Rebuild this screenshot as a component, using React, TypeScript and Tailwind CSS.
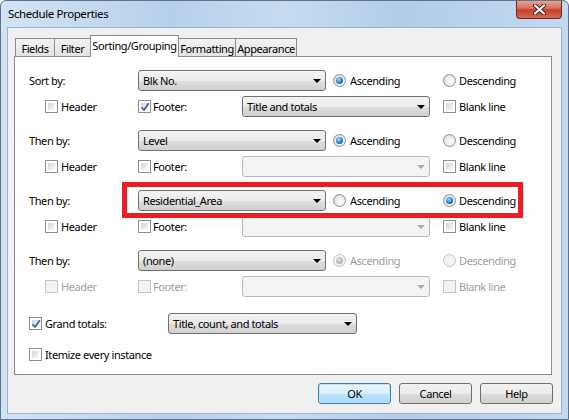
import React from "react";

const FONT = "font-['Noto_Sans',sans-serif] text-[11px] leading-none tracking-[-0.4px]";

function CheckBox({ checked = false, disabled = false }: { checked?: boolean; disabled?: boolean }) {
  return (
    <div
      className={`relative h-[13px] w-[13px] shrink-0 border p-[2px] ${
        disabled ? "border-[#c6c6c6] bg-[#f4f4f4]" : "border-[#8e8f8f] bg-white"
      }`}
    >
      <div
        className={`h-full w-full ${
          disabled
            ? "bg-[#f2f2f2]"
            : "bg-[linear-gradient(135deg,#cfd3d8,#eef0f2_70%,#f8f8f8)]"
        }`}
      />
      {checked && (
        <svg className="absolute left-[1px] top-[1px]" width="10" height="10" viewBox="0 0 10 10">
          <path d="M1.5 5.2 L4 8 L8.8 1.2" fill="none" stroke="#3b5aa0" strokeWidth="1.7" />
        </svg>
      )}
    </div>
  );
}

function Radio({ checked = false, disabled = false }: { checked?: boolean; disabled?: boolean }) {
  return (
    <div
      className={`flex h-[13px] w-[13px] shrink-0 items-center justify-center rounded-full border ${
        disabled
          ? "border-[#c4c4c4] bg-[#f2f2f2]"
          : "border-[#8e8f8f] bg-[radial-gradient(circle_at_60%_60%,#ffffff,#d6d6d6)]"
      }`}
    >
      {checked && (
        <div
          className={`h-[7px] w-[7px] rounded-full ${
            disabled
              ? "bg-[radial-gradient(circle_at_40%_35%,#e0e0e0,#9a9a9a)]"
              : "bg-[radial-gradient(circle_at_40%_35%,#9ddcff,#1c78c4_60%,#0c3f78)]"
          }`}
        />
      )}
    </div>
  );
}

function Combo({ value = "", width, disabled = false }: { value?: string; width: string; disabled?: boolean }) {
  return (
    <div
      className={`flex h-[21px] shrink-0 items-center justify-between rounded-[3px] border pl-[4px] pr-[4px] ${width} ${
        disabled
          ? "border-[#b5b8bc] bg-[#f4f4f4]"
          : "border-[#707070] bg-[linear-gradient(180deg,#f3f3f3_0%,#ebebeb_50%,#dedede_51%,#d0d0d0_100%)]"
      }`}
    >
      <span className="text-black">{value}</span>
      <svg width="8" height="4" viewBox="0 0 8 4">
        <path d="M0 0 H8 L4 4 Z" fill={disabled ? "#a9a9a9" : "#000"} />
      </svg>
    </div>
  );
}

function SortGroup({
  label,
  field,
  order,
  footer = false,
  footerValue = "",
  disabled = false,
  last = false,
}: {
  label: string;
  field: string;
  order: "asc" | "desc";
  footer?: boolean;
  footerValue?: string;
  disabled?: boolean;
  last?: boolean;
}) {
  const txt = disabled ? "text-[#a0a0a0]" : "text-black";
  return (
    <div className={`flex flex-col gap-[5px] ${last ? "" : "mb-[13px]"}`}>
      <div className="flex h-[21px] items-center">
        <span className="w-[109px] text-black">{label}</span>
        <Combo value={field} width="w-[188px]" />
        <div className="ml-[7px] flex w-[110px] items-center gap-[4px]">
          <Radio checked={order === "asc"} disabled={disabled} />
          <span className={txt}>Ascending</span>
        </div>
        <div className="flex items-center gap-[3px]">
          <Radio checked={order === "desc"} disabled={disabled} />
          <span className={txt}>Descending</span>
        </div>
      </div>
      <div className="flex h-[21px] items-center pl-[16px]">
        <div className="flex w-[93px] items-center gap-[3px]">
          <CheckBox disabled={disabled} />
          <span className={txt}>Header</span>
        </div>
        <div className="flex w-[104px] items-center gap-[2px]">
          <CheckBox checked={footer} disabled={disabled} />
          <span className={txt}>Footer:</span>
        </div>
        <Combo value={footerValue} width="w-[188px]" disabled={!footer} />
        <div className="ml-[13px] flex items-center gap-[3px]">
          <CheckBox disabled={disabled} />
          <span className={txt}>Blank line</span>
        </div>
      </div>
    </div>
  );
}

function Button({ label, primary = false }: { label: string; primary?: boolean }) {
  return (
    <div
      className={`flex h-[21px] w-[73px] items-center justify-center rounded-[3px] border text-black ${
        primary
          ? "border-[#3c7fb1] bg-[linear-gradient(180deg,#eaf6fd_0%,#d9f0fc_50%,#bee6fd_51%,#a7d9f5_100%)] shadow-[inset_0_0_0_1px_#bde3f7]"
          : "border-[#707070] bg-[linear-gradient(180deg,#f2f2f2_0%,#ebebeb_50%,#dddddd_51%,#cfcfcf_100%)]"
      }`}
    >
      {label}
    </div>
  );
}

export default function App() {
  const tabs = [
    { name: "Fields", w: "w-[40px]" },
    { name: "Filter", w: "w-[37px]" },
    { name: "Sorting/Grouping", w: "w-[89px]", active: true },
    { name: "Formatting", w: "w-[58px]" },
    { name: "Appearance", w: "w-[62px]" },
  ];

  return (
    <div
      className={`${FONT} flex h-[420px] w-[569px] flex-col overflow-hidden rounded-t-[6px] border border-[#5b7391] bg-[linear-gradient(90deg,#d3e3f4_0%,#b7d0ea_30%,#c6dbf0_50%,#b3cde9_70%,#c2d8ee_100%)]`}
    >
      {/* Title bar */}
      <div className="relative flex h-[26px] shrink-0 items-center pl-[7px]">
        <span className="text-[11.5px] text-black">Schedule Properties</span>
        <div className="absolute right-[6px] top-[-1px] flex h-[19px] w-[46px] items-center justify-center rounded-b-[4px] border border-t-0 border-[#6b2a20] bg-[linear-gradient(180deg,#e9a99b_0%,#d8705c_45%,#c4412a_55%,#d66a4f_100%)]">
          <svg width="13" height="11" viewBox="0 0 13 11">
            <path d="M2 1.5 L11 9.5 M11 1.5 L2 9.5" stroke="#4a1a12" strokeWidth="4" strokeLinecap="round" />
            <path d="M2 1.5 L11 9.5 M11 1.5 L2 9.5" stroke="#ffffff" strokeWidth="2.2" strokeLinecap="round" />
          </svg>
        </div>
      </div>

      {/* Client area */}
      <div className="mx-[6px] mb-[5px] flex flex-1 flex-col border border-[#9cb2ca] bg-[#f0f0f0]">
        {/* Tabs */}
        <div className="ml-[7px] mt-[7px] flex h-[21px] items-end">
          {tabs.map((t) =>
            t.active ? (
              <div
                key={t.name}
                className={`relative z-10 -mb-px -ml-px flex h-[22px] items-start justify-center border border-b-0 border-[#898c95] bg-white pt-[4px] ${t.w}`}
              >
                {t.name}
              </div>
            ) : (
              <div
                key={t.name}
                className={`flex h-[18px] items-center justify-center border border-b-0 border-[#898c95] bg-[linear-gradient(180deg,#f2f2f2,#e3e3e3)] -ml-px first:ml-0 pt-[2px] ${t.w}`}
              >
                {t.name}
              </div>
            )
          )}
        </div>

        {/* Tab panel */}
        <div className="relative ml-[6px] mr-[9px] flex h-[319px] flex-col border border-[#898c95] bg-white pl-[14px] pt-[13px]">
          <SortGroup label="Sort by:" field="Blk No." order="asc" footer footerValue="Title and totals" />
          <SortGroup label="Then by:" field="Level" order="asc" />
          <SortGroup label="Then by:" field="Residential_Area" order="desc" />
          <SortGroup label="Then by:" field="(none)" order="asc" disabled last />

          <div className="mt-[16px] flex h-[21px] items-center">
            <div className="flex w-[139px] items-center gap-[3px]">
              <CheckBox checked />
              <span>Grand totals:</span>
            </div>
            <Combo value="Title, count, and totals" width="w-[189px]" />
          </div>
          <div className="mt-[10px] flex h-[21px] items-center gap-[3px]">
            <CheckBox />
            <span>Itemize every instance</span>
          </div>

          {/* highlight */}
          <div className="pointer-events-none absolute left-[107px] top-[125px] h-[36px] w-[401px] border-[5px] border-[#ed1c24]" />
        </div>

        {/* Buttons */}
        <div className="mr-[8px] mt-[8px] flex justify-end gap-[8px]">
          <Button label="OK" primary />
          <Button label="Cancel" />
          <Button label="Help" />
        </div>
      </div>
    </div>
  );
}
